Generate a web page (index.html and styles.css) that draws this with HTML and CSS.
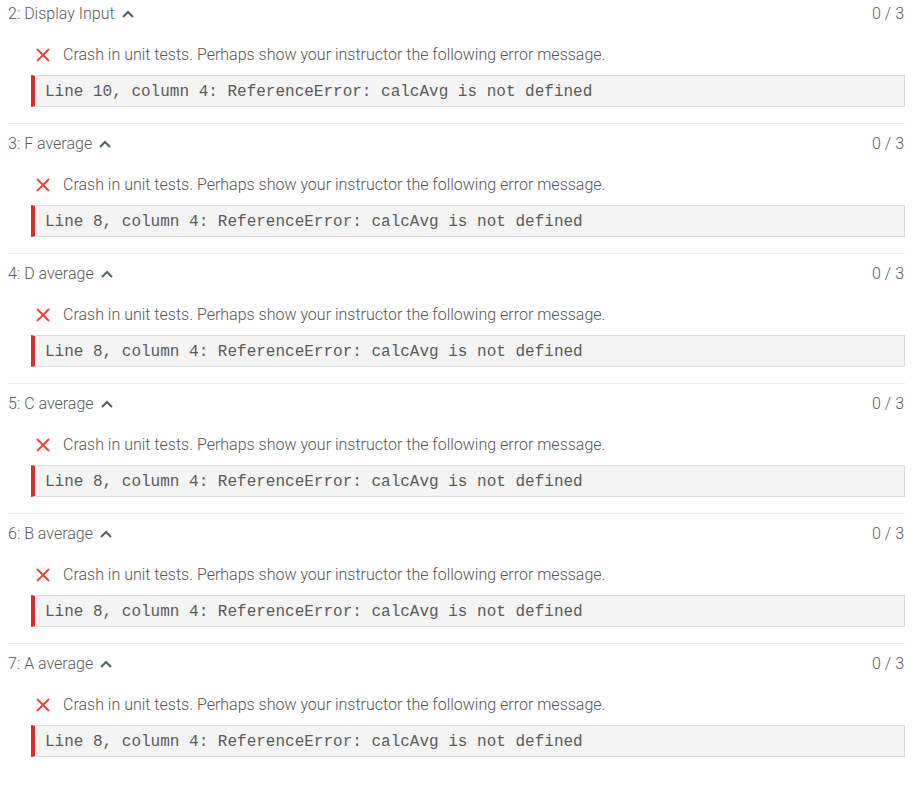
FILE: index.html
```html
<!DOCTYPE html>
<html>
<head>
<meta charset="utf-8">
<link rel="stylesheet" href="styles.css">
</head>
<body>
<div class="results">

  <section class="test">
    <div class="test-head">
      <span class="test-title">2: Display Input <svg class="chev" viewBox="0 0 12 8" width="12" height="8"><polyline points="1,7 6,2 11,7"/></svg></span>
      <span class="score">0 / 3</span>
    </div>
    <div class="msg"><svg class="xicon" viewBox="0 0 16 16" width="16" height="16"><line x1="2" y1="2" x2="14" y2="14"/><line x1="14" y1="2" x2="2" y2="14"/></svg><span>Crash in unit tests. Perhaps show your instructor the following error message.</span></div>
    <pre class="code">Line 10, column 4: ReferenceError: calcAvg is not defined</pre>
  </section>

  <section class="test">
    <div class="test-head">
      <span class="test-title">3: F average <svg class="chev" viewBox="0 0 12 8" width="12" height="8"><polyline points="1,7 6,2 11,7"/></svg></span>
      <span class="score">0 / 3</span>
    </div>
    <div class="msg"><svg class="xicon" viewBox="0 0 16 16" width="16" height="16"><line x1="2" y1="2" x2="14" y2="14"/><line x1="14" y1="2" x2="2" y2="14"/></svg><span>Crash in unit tests. Perhaps show your instructor the following error message.</span></div>
    <pre class="code">Line 8, column 4: ReferenceError: calcAvg is not defined</pre>
  </section>

  <section class="test">
    <div class="test-head">
      <span class="test-title">4: D average <svg class="chev" viewBox="0 0 12 8" width="12" height="8"><polyline points="1,7 6,2 11,7"/></svg></span>
      <span class="score">0 / 3</span>
    </div>
    <div class="msg"><svg class="xicon" viewBox="0 0 16 16" width="16" height="16"><line x1="2" y1="2" x2="14" y2="14"/><line x1="14" y1="2" x2="2" y2="14"/></svg><span>Crash in unit tests. Perhaps show your instructor the following error message.</span></div>
    <pre class="code">Line 8, column 4: ReferenceError: calcAvg is not defined</pre>
  </section>

  <section class="test">
    <div class="test-head">
      <span class="test-title">5: C average <svg class="chev" viewBox="0 0 12 8" width="12" height="8"><polyline points="1,7 6,2 11,7"/></svg></span>
      <span class="score">0 / 3</span>
    </div>
    <div class="msg"><svg class="xicon" viewBox="0 0 16 16" width="16" height="16"><line x1="2" y1="2" x2="14" y2="14"/><line x1="14" y1="2" x2="2" y2="14"/></svg><span>Crash in unit tests. Perhaps show your instructor the following error message.</span></div>
    <pre class="code">Line 8, column 4: ReferenceError: calcAvg is not defined</pre>
  </section>

  <section class="test">
    <div class="test-head">
      <span class="test-title">6: B average <svg class="chev" viewBox="0 0 12 8" width="12" height="8"><polyline points="1,7 6,2 11,7"/></svg></span>
      <span class="score">0 / 3</span>
    </div>
    <div class="msg"><svg class="xicon" viewBox="0 0 16 16" width="16" height="16"><line x1="2" y1="2" x2="14" y2="14"/><line x1="14" y1="2" x2="2" y2="14"/></svg><span>Crash in unit tests. Perhaps show your instructor the following error message.</span></div>
    <pre class="code">Line 8, column 4: ReferenceError: calcAvg is not defined</pre>
  </section>

  <section class="test last">
    <div class="test-head">
      <span class="test-title">7: A average <svg class="chev" viewBox="0 0 12 8" width="12" height="8"><polyline points="1,7 6,2 11,7"/></svg></span>
      <span class="score">0 / 3</span>
    </div>
    <div class="msg"><svg class="xicon" viewBox="0 0 16 16" width="16" height="16"><line x1="2" y1="2" x2="14" y2="14"/><line x1="14" y1="2" x2="2" y2="14"/></svg><span>Crash in unit tests. Perhaps show your instructor the following error message.</span></div>
    <pre class="code">Line 8, column 4: ReferenceError: calcAvg is not defined</pre>
  </section>

</div>
</body>
</html>
```

FILE: styles.css
```css
html, body {
  margin: 0;
  padding: 0;
  background: #ffffff;
}

body {
  font-family: Roboto, "Liberation Sans", sans-serif;
  font-weight: 300;
  font-size: 16px;
  color: #555;
}

.results {
  padding: 1px 7px 0 8px;
}

.test {
  padding-bottom: 16px;
  border-bottom: 1px solid #eaeaea;
  margin-bottom: 7px;
}

.test.last {
  border-bottom: none;
}

.test-head {
  display: flex;
  justify-content: space-between;
  align-items: center;
  height: 26px;
  line-height: 26px;
}

.test-title {
  display: inline-flex;
  align-items: center;
  gap: 7px;
  color: #5a5a5a;
}

.chev {
  fill: none;
  stroke: #4f5f6b;
  stroke-width: 2;
  margin-top: -1px;
}

.score {
  color: #5a5a5a;
  padding-right: 1px;
}

.msg {
  display: flex;
  align-items: center;
  gap: 12px;
  margin: 16px 0 0 27px;
  height: 24px;
  line-height: 24px;
  color: #555;
}

.xicon {
  stroke: #f44336;
  stroke-width: 2;
  flex: none;
}

.code {
  margin: 8px 0 0 23px;
  padding: 5px 10px 3px;
  line-height: 22px;
  background: #f4f4f4;
  border: 1px solid #dcdcdc;
  border-left: 4px solid #d32f2f;
  font-family: "Liberation Mono", "Courier New", monospace;
  font-size: 16px;
  font-weight: 400;
  color: #5a5a5a;
  white-space: pre;
}
```
